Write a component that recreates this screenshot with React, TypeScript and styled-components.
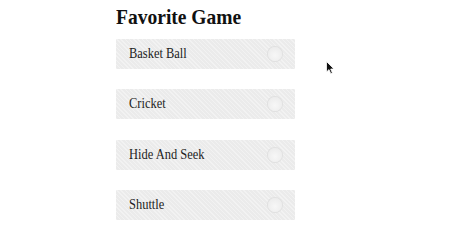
import React from "react";
import styled, { createGlobalStyle } from "styled-components";

const Global = createGlobalStyle`
  html, body { margin: 0; padding: 0; background: #fff; }
  body { font-family: "Liberation Serif", "Times New Roman", serif; }
`;

const Page = styled.div`
  position: relative;
  width: 474px;
  height: 239px;
  padding: 5px 0 0 116px;
  box-sizing: border-box;
`;

const Title = styled.h2`
  margin: 0 0 9px;
  font-size: 21px;
  line-height: 25px;
  font-weight: bold;
  color: #111;
  transform: scaleX(0.93);
  transform-origin: left center;
`;

const List = styled.div`
  display: flex;
  flex-direction: column;
  gap: 20.3px;
`;

const Option = styled.label`
  display: flex;
  align-items: center;
  justify-content: space-between;
  width: 179px;
  height: 30px;
  box-sizing: border-box;
  padding: 0 13px;
  background-color: #ebebeb;
  background-image: repeating-linear-gradient(
    45deg,
    rgba(255, 255, 255, 0.35) 0px,
    rgba(255, 255, 255, 0.35) 1px,
    transparent 1px,
    transparent 3px
  );
  color: #222;
  cursor: pointer;
`;

const Text = styled.span`
  display: inline-block;
  font-size: 14px;
  transform: scaleX(0.89);
  transform-origin: left center;
`;

const Radio = styled.span`
  width: 14px;
  height: 14px;
  border-radius: 50%;
  background: radial-gradient(circle at 50% 60%, #f7f7f7 0%, #ededed 70%, #e2e2e2 100%);
  box-shadow: 0 0 0 1px #e0e0e0;
`;

const Cursor = styled.svg`
  position: absolute;
  left: 326px;
  top: 61px;
`;

const games = ["Basket Ball", "Cricket", "Hide And Seek", "Shuttle"];

export default function App() {
  return (
    <>
      <Global />
      <Page>
        <Title>Favorite Game</Title>
        <List>
          {games.map((g) => (
            <Option key={g}>
              <Text>{g}</Text>
              <Radio />
            </Option>
          ))}
        </List>
        <Cursor width="9" height="14" viewBox="0 0 9 14">
          <path d="M0.5 0.5 L0.5 11 L3 8.6 L4.8 12.8 L6.4 12.1 L4.7 8 L8 8 Z" fill="#111" stroke="#fff" strokeWidth="0.8" />
        </Cursor>
      </Page>
    </>
  );
}
